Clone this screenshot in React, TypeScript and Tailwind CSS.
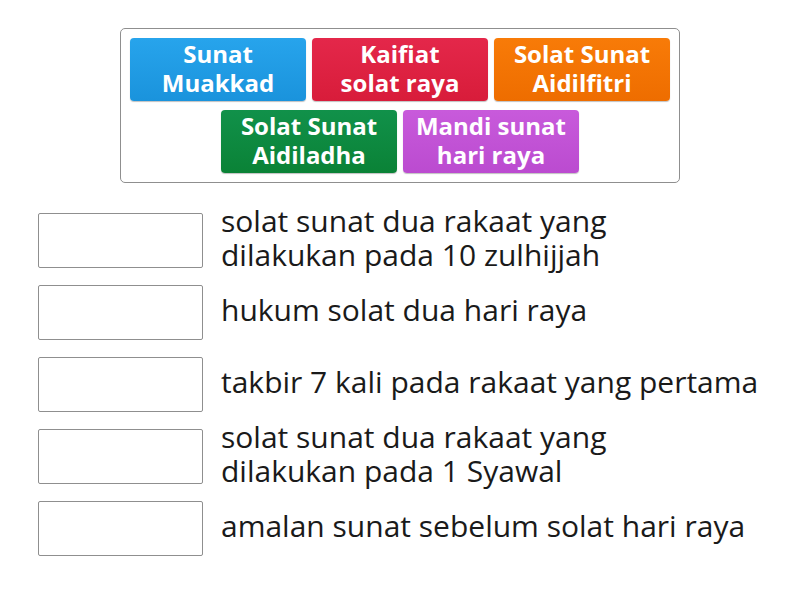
const tiles = [
  { label: ["Sunat", "Muakkad"], cls: "bg-gradient-to-b from-[#27a4ec] to-[#1a93dc]" },
  { label: ["Kaifiat", "solat raya"], cls: "bg-gradient-to-b from-[#e4274a] to-[#d81c3a]" },
  { label: ["Solat Sunat", "Aidilfitri"], cls: "bg-gradient-to-b from-[#f87b08] to-[#ee6d00]" },
  { label: ["Solat Sunat", "Aidiladha"], cls: "bg-gradient-to-b from-[#11914a] to-[#0a8236]" },
  { label: ["Mandi sunat", "hari raya"], cls: "bg-gradient-to-b from-[#c85adb] to-[#bb4bd0]" },
];

const answers = [
  ["solat sunat dua rakaat yang", "dilakukan pada 10 zulhijjah"],
  ["hukum solat dua hari raya"],
  ["takbir 7 kali pada rakaat yang pertama"],
  ["solat sunat dua rakaat yang", "dilakukan pada 1 Syawal"],
  ["amalan sunat sebelum solat hari raya"],
];

function Tile({ label, cls }: { label: string[]; cls: string }) {
  return (
    <div
      className={`w-[176px] h-[63px] pb-[3px] rounded-[4px] flex flex-col items-center justify-center text-white font-bold text-[24px] leading-[29px] shadow-[0_1px_1px_rgba(0,0,0,0.25)] ${cls}`}
    >
      {label.map((l) => (
        <span key={l}>{l}</span>
      ))}
    </div>
  );
}

export default function App() {
  return (
    <div className="w-[800px] h-[600px] bg-white pt-[28px]" style={{ fontFamily: '"Open Sans", sans-serif' }}>
      <div className="w-[560px] mx-auto border border-[#8f8f8f] rounded-[5px] pt-[9px] pb-[9px] flex flex-wrap justify-center gap-x-[6px] gap-y-[9px]">
        {tiles.map((t) => (
          <Tile key={t.label.join(" ")} label={t.label} cls={t.cls} />
        ))}
      </div>
      <div className="mt-[30px] pl-[38px] flex flex-col gap-[17px]">
        {answers.map((a, i) => (
          <div key={i} className="h-[55px] flex items-center gap-[18px]">
            <div className="w-[165px] h-[55px] border border-[#8f8f8f] rounded-[2px] bg-white shrink-0" />
            <div className="text-[#1a1a1a] text-[30px] leading-[34px] pb-[5px]">
              {a.map((l) => (
                <div key={l}>{l}</div>
              ))}
            </div>
          </div>
        ))}
      </div>
    </div>
  );
}
